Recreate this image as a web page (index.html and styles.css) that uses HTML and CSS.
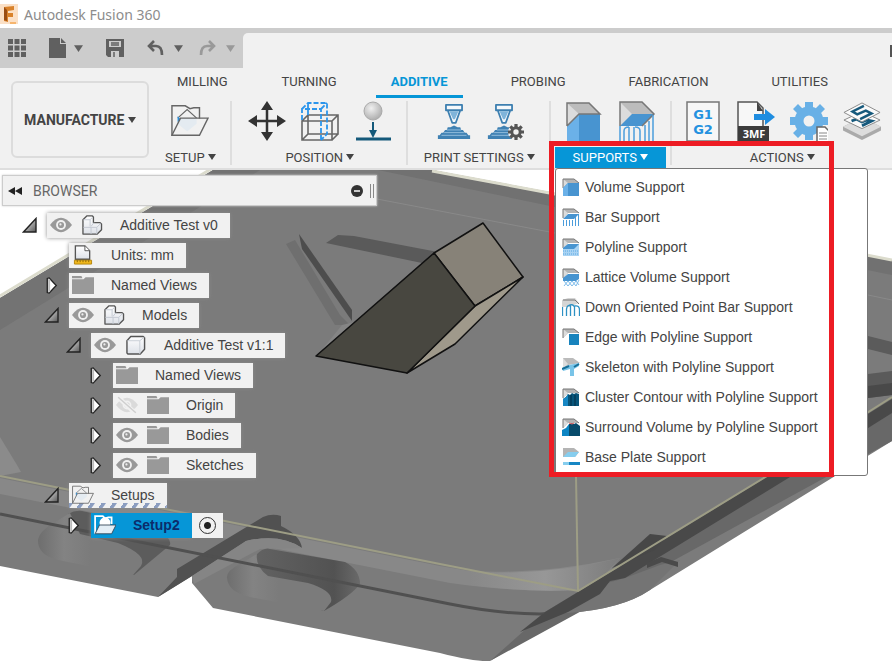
FILE: index.html
```
<!DOCTYPE html>
<html lang="en">

<head>
    <meta charset="utf-8">
    <title>Autodesk Fusion 360</title>
    <meta name="viewport" content="width=device-width, initial-scale=1">
    <link rel="stylesheet" href="styles.css">
</head>

<body>

    <!-- shared icons -->
    <svg class="defs" width="0" height="0" aria-hidden="true">
        <defs>
            <linearGradient id="metal" x1="0" y1="0" x2="1" y2="1">
                <stop offset="0" stop-color="#fff" />
                <stop offset="1" stop-color="#555" />
            </linearGradient>
            <linearGradient id="box-side" x1="0" y1="0" x2="0" y2="1">
                <stop offset="0" stop-color="#fff" />
                <stop offset="1" stop-color="#dde1e8" />
            </linearGradient>
            <symbol id="caret" viewBox="0 0 8 6"><path d="M0 0h8L4 6z" fill="currentColor" /></symbol>
            <symbol id="eye" viewBox="0 0 20 14">
                <path d="M0 7Q10-6 20 7Q10 20 0 7z" fill="#999" />
                <circle cx="10" cy="7" r="4.5" fill="#f1f1f1" />
                <circle cx="10" cy="7" r="2.8" fill="#999" />
                <circle cx="9.500" cy="6.500" r="1" fill="#eee" />
            </symbol>
            <symbol id="eye-off" viewBox="0 0 20 14">
                <path d="M0 7Q10-6 20 7Q10 20 0 7z" fill="#dadada" />
                <circle cx="10" cy="7" r="4" fill="#f1f1f1" />
                <circle cx="10" cy="7" r="2.500" fill="#dadada" />
                <path d="M2 0l15 14" stroke="#f1f1f1" stroke-width="4" />
                <path d="M2 0l16 14" stroke="#cfcfcf" stroke-width="1.300" />
            </symbol>
            <symbol id="folder" viewBox="0 0 21 17">
                <path d="M0 0h9l1 2H0zM0 3h11l2-2h8v16H0z" fill="#999" />
            </symbol>
            <symbol id="parts" viewBox="0 0 22 21">
                <path d="M1.500 5l4-4h6l1 1v6h7l1.500 1.500v6l-4.500 4.500h-15z" fill="url(#box-side)" stroke="#555" stroke-width="1.400" stroke-linejoin="round" />
                <path d="M2 13h8v7M10 12l3-4M10 13h6l4-4M16 13v7M9 12V5H2M9 5l3-3" fill="none" stroke="#c3c8d2" />
            </symbol>
            <symbol id="cube" viewBox="0 0 22 21">
                <path d="M1.500 6l4-4.500h13l1.500 1.500v12l-4.500 5h-13l-1-1z" fill="url(#box-side)" stroke="#555" stroke-width="1.500" stroke-linejoin="round" />
                <path d="M2 6h13v14M15 6l5-4" fill="none" stroke="#c8ced6" />
            </symbol>
            <symbol id="units" viewBox="0 0 20 21">
                <path d="M2 15V1h10l5 5v9z" fill="url(#box-side)" stroke="#555" stroke-width="1.400" />
                <path d="M12 1v5h5" fill="#fff" stroke="#555" />
                <path d="M1 16h18v4H1z" fill="#f2b91d" stroke="#b5860c" />
                <path d="M4 16v2M7 16v2M10 16v2M13 16v2M16 16v2" stroke="#8a6400" />
            </symbol>
            <symbol id="setup" viewBox="0 0 40 34">
                <path d="M1 32V1h14l5 3 4-1h6v12" fill="none" stroke="#666" stroke-width="1.500" />
                <path d="M7 14l10-9 10 9v6l-10 8-10-8z" fill="#cfe2f1" />
                <path d="M7 14l10-9 10 9" fill="#f1f1f1" stroke="#666" stroke-width="1.200" />
                <path d="M7 12v6l3-3z" fill="#2a8fdc" />
                <path d="M1 32l9-18h29l-9 18z" fill="#f1f1f1" fill-opacity=".6" stroke="#666" stroke-width="1.500" />
            </symbol>
            <symbol id="open" viewBox="0 0 16 16"><path d="M1.500 14.500h12.500V1z" fill="url(#metal)" stroke="#222" stroke-width="1.400" /></symbol>
            <symbol id="closed" viewBox="0 0 16 18"><path d="M3 1.500v15l2 .500 7.500-8L5 1z" fill="#fff" stroke="#222" stroke-width="1.400" /><path d="M5 2v14" stroke="#bbb" stroke-width="2" /></symbol>
            <symbol id="wedge" viewBox="0 0 18 18">
                <path d="M1 1h11l5 4H6l-5 5z" fill="#b4b4b4" /><path d="M1 1l5 4-5 5z" fill="#dcdcdc" />
                <path d="M1 10V1h11l5 4" fill="none" stroke="#777" />
            </symbol>
            <symbol id="nozzle" viewBox="0 0 38 40">
                <path d="M10 2h18v6H10zM12 8h14l-5 14h-4z" fill="#f4f8fb" stroke="#3d7fb0" stroke-width="2" stroke-linejoin="round" />
                <path d="M14 9h10l-4 9h-2z" fill="#7fb4da" />
                <path d="M19 25l4 2h3l1 3h2l2 3h2l2 3h2v4H1v-4h2l2-3h2l2-3h2l1-3h3z" fill="#3f81b3" />
                <path d="M11 30h16M8 33h22M5 36h28" stroke="#9cc4e2" />
            </symbol>
        </defs>
    </svg>

    <header class="titlebar">
        <svg class="logo" viewBox="0 0 18 20" aria-hidden="true">
            <path d="M0 0h18v20H0z" fill="#fbe0c6" />
            <path d="M4 3l10-1v4l-6 1v2h5v4H8v5l-4-1z" fill="#d9822b" />
            <path d="M4 3l3 3v11l-3-1z" fill="#9a4d12" />
            <path d="M10 18h6v2h-6z" fill="#f6b56e" />
        </svg>
        <h1>Autodesk Fusion 360</h1>
    </header>

    <div class="quickbar">
        <div class="quick-tools">
            <button type="button" aria-label="Data panel">
                <svg width="18" height="18" viewBox="0 0 18 18"><path d="M0 0h5v5H0zM6.500 0h5v5h-5zM13 0h5v5h-5zM0 6.500h5v5H0zM6.500 6.500h5v5h-5zM13 6.500h5v5h-5zM0 13h5v5H0zM6.500 13h5v5h-5zM13 13h5v5h-5z" fill="#606060" /></svg>
            </button>
            <button type="button" aria-label="File">
                <svg width="18" height="20" viewBox="0 0 18 20"><path d="M0 0h11v6h6v14H0zM12 0l5 5h-5z" fill="#606060" /></svg>
                <svg class="drop"><use href="#caret" /></svg>
            </button>
            <button type="button" aria-label="Save">
                <svg width="18" height="18" viewBox="0 0 18 18"><path d="M0 0h18v18H2l-2-2z" fill="#606060" /><path d="M3 2h12v6H3zM5 12h8v6H5z" fill="#ccc" /><path d="M5 4h8M5 6h8M8 13v5" stroke="#606060" stroke-width="1.500" /></svg>
            </button>
            <div class="history">
                <button type="button" aria-label="Undo">
                    <svg width="17" height="16" viewBox="0 0 17 16"><path d="M7 1L2 6l5 5M2 6h7q6 0 6 9" fill="none" stroke="#606060" stroke-width="2.600" /></svg>
                    <svg class="drop"><use href="#caret" /></svg>
                </button>
                <button type="button" aria-label="Redo" disabled>
                    <svg width="17" height="16" viewBox="0 0 17 16"><path d="M10 1l5 5-5 5M15 6H8Q2 6 2 15" fill="none" stroke="#999" stroke-width="2.600" /></svg>
                    <svg class="drop"><use href="#caret" /></svg>
                </button>
            </div>
        </div>
        <div class="doc-tab"><span class="doc-icon"></span></div>
    </div>

    <div class="ribbon">
        <button type="button" class="workspace">MANUFACTURE <svg class="caret"><use href="#caret" /></svg></button>
        <div class="ribbon-main">
            <nav class="tabs">
                <a href="#">MILLING</a>
                <a href="#">TURNING</a>
                <a href="#" class="active">ADDITIVE</a>
                <a href="#">PROBING</a>
                <a href="#">FABRICATION</a>
                <a href="#">UTILITIES</a>
            </nav>

            <div class="groups">
                <div class="group">
                    <div class="icons">
                        <svg viewBox="0 0 40 40"><use href="#setup" y="3" width="40" height="34" /></svg>
                    </div>
                    <button type="button" class="group-name">SETUP <svg class="caret"><use href="#caret" /></svg></button>
                </div>

                <div class="group">
                    <div class="icons">
                        <svg viewBox="0 0 38 40"><path d="M19 5v30M4 20h30" stroke="#333" stroke-width="2.500" /><path d="M19 0l6 9H13zM19 40l6-9H13zM0 20l9-6v12zM38 20l-9-6v12z" fill="#333" /></svg>
                        <svg viewBox="0 0 38 40" fill="none" stroke-width="1.600">
                            <path d="M1 20h30v19H1zM7 14h30v19H7zM1 20l6-6M31 20l6-6M31 39l6-6M1 39l6-6" stroke="#666" />
                            <path d="M1 19V8h19v31M1 8l6-6h19v31l-6 6M20 8l6-6M7 2v12" stroke="#2b95ec" stroke-width="1.800" stroke-dasharray="5 2" />
                        </svg>
                        <svg viewBox="0 0 38 40"><defs><radialGradient id="ball" cx=".4" cy=".35" r=".7"><stop offset="0" stop-color="#f0f0f0" /><stop offset="1" stop-color="#aaa" /></radialGradient></defs>
                            <circle cx="19" cy="10" r="9" fill="url(#ball)" stroke="#aaa" /><path d="M19 21v9" stroke="#14597a" stroke-width="2" /><path d="M15 29h8l-4 8z" fill="#14597a" /><path d="M2 36.500h35v3H2z" fill="#14597a" />
                        </svg>
                    </div>
                    <button type="button" class="group-name">POSITION <svg class="caret"><use href="#caret" /></svg></button>
                </div>

                <div class="group">
                    <div class="icons">
                        <svg viewBox="0 0 38 40"><use href="#nozzle" x="3" width="34" height="40" /></svg>
                        <svg viewBox="0 0 38 40"><use href="#nozzle" x="0" width="34" height="40" />
                            <circle cx="29" cy="31" r="8" fill="#f1f1f1" />
                            <path d="M29 23v16M21 31h16M23.300 25.300l11.400 11.400M34.700 25.300L23.300 36.700" stroke="#555" stroke-width="3.200" />
                            <circle cx="29" cy="31" r="4.200" fill="#f1f1f1" stroke="#555" stroke-width="3" />
                        </svg>
                    </div>
                    <button type="button" class="group-name">PRINT SETTINGS <svg class="caret"><use href="#caret" /></svg></button>
                </div>

                <div class="group supports">
                    <div class="icons">
                        <svg viewBox="0 0 38 40"><path d="M2 2h22l11 11H14L2 25z" fill="#bcbcbc" /><path d="M2 2l12 11L2 25z" fill="#dcdcdc" /><path d="M2 25l12-12v27H2z" fill="#6bb1e8" /><path d="M14 13h21v27H14z" fill="#4894d0" /><path d="M2 25V2h22l11 11H14L2 25" fill="none" stroke="#777" stroke-width="1.500" /></svg>
                        <svg viewBox="0 0 38 40"><path d="M2 1h22l12 12H14L2 25z" fill="#bcbcbc" /><path d="M2 1l12 12L2 25z" fill="#dcdcdc" /><path d="M2 25l12-12h22L24 25z" fill="#4894d0" /><path d="M2 25V1h22l12 12-12 12" fill="none" stroke="#777" stroke-width="1.500" /><path d="M2 40V25M6 40V30q0-4 5-4M11 40V26M16 40V26M22 40V30q0-4-5-4M27 40V24M31 40V20M35 40V14" fill="none" stroke="#4b9ddc" stroke-width="1.500" /></svg>
                    </div>
                    <button type="button" class="group-name open" aria-expanded="true">SUPPORTS <svg class="caret"><use href="#caret" /></svg></button>

                    <ul class="menu">
                        <li><button type="button"><svg viewBox="0 0 18 18"><use href="#wedge" /><path d="M1 10l5-5h11v13H1z" fill="#4894d0" /><path d="M1 10l5-5v13H1z" fill="#6bb1e8" /></svg>Volume Support</button></li>
                        <li><button type="button"><svg viewBox="0 0 18 18"><use href="#wedge" /><path d="M1 11l5-5h11l-5 5z" fill="#4894d0" /><path d="M1.500 18v-6M4.500 18v-6M7.500 18v-6M10.500 18v-6M13.500 18V9M16.500 18V6" stroke="#4b9ddc" /></svg>Bar Support</button></li>
                        <li><button type="button"><svg viewBox="0 0 18 18"><use href="#wedge" /><path d="M1 10l5-4h11v12H1z" fill="#a9d3f3" /><path d="M1 10l5-4h11l-5 5H1z" fill="#4894d0" /><path d="M1 13h16M1 16h16" stroke="#5aa7e2" stroke-dasharray="1 1" /></svg>Polyline Support</button></li>
                        <li><button type="button"><svg viewBox="0 0 18 18"><use href="#wedge" /><path d="M1 10l5-4h11v5l-3 2H1z" fill="#4894d0" /><path d="M2 18l4-5 4 5 4-5 3 4M2 13l4 5 4-5 4 5 3-6" fill="none" stroke="#7dbbea" /></svg>Lattice Volume Support</button></li>
                        <li><button type="button"><svg viewBox="0 0 18 18"><path d="M0 2l6-2h7l4 5-10 4H0z" fill="#d5d5d5" /><path d="M.500 18V9M4.500 18v-7q1-5 4-3v10M12.500 18V9q-2-4-6-1M12.500 8q5-1 5 4v6" fill="none" stroke="#2e91c4" stroke-width="1.300" /><path d="M1 2h12l4 4" fill="none" stroke="#777" /></svg>Down Oriented Point Bar Support</button></li>
                        <li><button type="button"><svg viewBox="0 0 18 18"><use href="#wedge" /><path d="M7 6h10v11H7z" fill="#1883bd" /></svg>Edge with Polyline Support</button></li>
                        <li><button type="button"><svg viewBox="0 0 18 18"><path d="M1 0h10l7 5-12 2-5 4z" fill="#bbb" /><path d="M1 0l5 6-5 5z" fill="#ddd" /><path d="M0 10l7-3 10-2v3l-5 3v7H8v-7l-7 2z" fill="#79c4e8" /><path d="M0 11l7-3M12 9l5-3" stroke="#176f98" stroke-width="2" /></svg>Skeleton with Polyline Support</button></li>
                        <li><button type="button"><svg viewBox="0 0 18 18"><use href="#wedge" /><path d="M1 11l3-2 2-3 2 1 2-2 2 1 2-1 3 1v12H1z" fill="#08557a" /><path d="M1 11l3-2 2-3v12H1z" fill="#1787c4" /><path d="M9 7v11M13 7v11" stroke="#022f46" /></svg>Cluster Contour with Polyline Support</button></li>
                        <li><button type="button"><svg viewBox="0 0 18 18"><use href="#wedge" /><path d="M7 6l3-1 2 1 2-1 4 3v10H7z" fill="#074b6b" /><path d="M0 12l4-2 3-4v12H0z" fill="#0d85c4" /><path d="M7 5l3 1 2-1" stroke="#e66" fill="none" /></svg>Surround Volume by Polyline Support</button></li>
                        <li><button type="button"><svg viewBox="0 0 18 18"><path d="M1 0h11l5 4-4 5H1z" fill="#b4b4b4" /><path d="M1 9l5-5h11l-4 5z" fill="#86cdee" /><path d="M1 14h6v3H1z" fill="#86cdee" /><path d="M7 14h11v3H7z" fill="#1787c4" /></svg>Base Plate Support</button></li>
                    </ul>
                    <div class="callout"></div>
                </div>

                <div class="group actions">
                    <div class="icons">
                        <svg viewBox="0 0 38 40"><path d="M3 1h32v39H3z" fill="#f7f7f7" stroke="#777" stroke-width="1.500" /><text x="19" y="18" class="gcode">G1</text><text x="19" y="33" class="gcode">G2</text></svg>
                        <svg viewBox="0 0 38 40"><path d="M1 40V1h19l6 6v33" fill="#f7f7f7" stroke="#555" stroke-width="1.500" /><path d="M20 1l6 9h-6z" fill="#444" /><path d="M17 13h11V8l10 8-10 8v-5H17z" fill="#1f8de0" /><path d="M1 25h31v15H1z" fill="#3c3c3c" /><text x="17" y="37" class="mf">3MF</text></svg>
                        <svg viewBox="0 0 38 40"><circle cx="19" cy="20" r="10" fill="none" stroke="#68b0e6" stroke-width="9" /><path d="M15 1h8v7h-8zM15 32h8v7h-8zM0 16h7v8H0zM31 16h7v8h-7zM3 8l5-5 6 6-5 5zM24 9l6-6 5 5-6 6zM3 32l6-6 5 5-6 6z" fill="#68b0e6" /><path d="M27 26h8l4 4v12H27z" fill="#fff" stroke="#666" stroke-width="1.500" /><path d="M29 32h8M29 35h8M29 38h8" stroke="#888" /></svg>
                        <svg viewBox="0 0 40 40"><path d="M0 26l20-10 20 10v4L20 40 0 30z" fill="#aaa" /><path d="M0 26l20-10 20 10-20 10z" fill="#ddd" /><path d="M1 19l19-9 19 9-19 9z" fill="#fafafa" stroke="#888" /><path d="M9 20l5-2 6 3 5-2 5 1-10 5" stroke="#16597c" stroke-width="3" fill="none" /><path d="M1 11l19-10 19 10-19 10z" fill="#fafafa" stroke="#888" /><path d="M22 4l-12 6 5 3 9-4 6 3-12 6" stroke="#16597c" stroke-width="2.600" fill="none" /></svg>
                    </div>
                    <button type="button" class="group-name">ACTIONS <svg class="caret"><use href="#caret" /></svg></button>
                </div>
            </div>
        </div>
    </div>

    <main class="viewport">
        <svg class="scene" viewBox="0 170 892 498" preserveAspectRatio="xMinYMin slice" aria-hidden="true">
            <defs>
                <linearGradient id="slot"><stop offset="0" stop-color="#6e6e6e" /><stop offset=".25" stop-color="#838383" /><stop offset=".5" stop-color="#7b7b7b" /></linearGradient>
                <linearGradient id="dark-end"><stop offset="0" stop-color="#626262" /><stop offset=".75" stop-color="#525252" /><stop offset="1" stop-color="#6a6a6a" /></linearGradient>
                <linearGradient id="corner"><stop offset="0" stop-color="#888" /><stop offset=".5" stop-color="#979797" /><stop offset="1" stop-color="#7c7c7c" /></linearGradient>
            </defs>
            <path d="M0 298L213 170H432L555 193L892 260V441L650 590Q622 609 568 613L490 661Q475 662 440 653L213 608L192 583V576L158 597L0 566z" fill="#7b7b7b" />
            <path d="M0 298L213 170H260L0 330z" fill="#737373" />
            <path d="M378 170h54L892 261v14L555 207z" fill="#717171" />
            <path d="M0 296L211 169M432 171L555 194L892 260" fill="none" stroke="#dcdccd" stroke-width="3" />
            <path d="M377 199L555 233L868 295L892 300" fill="none" stroke="#898989" />

            <!-- pockets in the plate -->
            <path d="M0 437L17 465 21 472 0 476z" fill="#8b8b8b" />
            <path d="M286 244l9-4 45 75 10 10-15 0z" fill="#6f6f6f" />
            <path d="M299 234l53 76v11l-50-72z" fill="#4d4d4d" />
            <path d="M342 325l-22 27 24-5 10-25z" fill="#858585" />
            <path d="M326 243l12-8 16 1 84 16-16 11z" fill="#5a5a5a" />
            <path d="M868 336l24 6v13l-24-6z" fill="#5b5b5b" />
            <path d="M868 374l24-3v24l-24 3z" fill="#5a5a5a" />
            <path d="M868 386l24-3v12l-24 3z" fill="#494949" />

            <!-- front wall -->
            <path d="M0 478L440 566L470 571Q540 575 620 558L600 583L578 590Q520 593 450 583L0 494z" fill="#888" />
            <path d="M470 572Q550 576 620 558L600 580 578 590Q530 593 470 585z" fill="url(#corner)" />
            <path d="M177 569L263 517Q272 513 281 516V526Q300 535 302 548Q280 533 246 541L192 576 158 597 177 577z" fill="#515151" />
            <path d="M246 541Q280 533 302 548L260 549 194 584 192 576z" fill="#858585" />
            <path d="M68 514Q75 510 82 511L150 526Q172 536 170 545L134 575 68 545z" fill="#5c5c5c" />
            <path d="M38 541Q38 532 55 522L70 513 80 534 118 543Q148 555 141 566L133 575L58 560Q38 555 38 541z" fill="url(#slot)" />
            <path d="M256 555Q264 547 270 549L345 562Q360 570 360 584Q352 595 324 611L256 590z" fill="url(#dark-end)" />
            <path d="M227 578Q226 571 240 564L257 554Q255 566 268 576L308 583Q334 591 331 602L324 611L250 597Q228 592 227 578z" fill="url(#slot)" />
            <path d="M0 514L450 604Q500 614 540 614L572 612" fill="none" stroke="#505050" stroke-width="3" />

            <!-- right wall -->
            <path d="M892 397L767 476 578 592 545 612 490 661 892 441z" fill="#686868" />
            <path d="M578 592Q610 582 625 578L660 565 680 560 650 590Q622 609 568 613L545 612z" fill="#747474" />
            <path d="M892 399L767 477 578 592 545 612 520 632 568 612 600 594 610 581 625 578 790 477 892 413z" fill="#494949" />
            <path d="M612 568L650 534 667 536 655 550z" fill="#474747" />
            <path d="M647 563l14-6 17 5v5l-16-5-15 6z" fill="#4a4a4a" />
            <path d="M0 476L440 564L578 591L767 476L892 397M576 476L578 591" fill="none" stroke="#9d9d85" stroke-width="2" />

            <!-- part body -->
            <g stroke="#111" stroke-width="1.500" stroke-linejoin="round">
                <path d="M434 253L483 223 523 277 475 306z" fill="#878278" />
                <path d="M475 306L523 277 455 344 407 373z" fill="#9f998b" />
                <path d="M316 356L434 253 475 306 407 373z" fill="#484740" />
            </g>
        </svg>

        <section class="browser">
            <div class="browser-head">
                <button type="button" aria-label="Collapse"><svg width="14" height="8" viewBox="0 0 14 8"><path d="M7 0v8L0 4zM14 0v8L7 4z" fill="#222" /></svg></button>
                <h2>BROWSER</h2>
                <button type="button" aria-label="Minimize"><svg width="12" height="12" viewBox="0 0 12 12"><circle cx="6" cy="6" r="6" fill="#333" /><path d="M3 6h6" stroke="#fff" stroke-width="1.500" /></svg></button>
                <span class="grip"></span>
            </div>

            <ul class="tree">
                <li>
                    <div class="node"><svg class="arrow"><use href="#open" /></svg><span class="chip"><svg><use href="#eye" /></svg><svg><use href="#parts" /></svg>Additive Test v0</span></div>
                    <ul>
                        <li><div class="node"><span class="arrow"></span><span class="chip"><svg><use href="#units" /></svg>Units: mm</span></div></li>
                        <li><div class="node"><svg class="arrow"><use href="#closed" /></svg><span class="chip"><svg><use href="#folder" /></svg>Named Views</span></div></li>
                        <li>
                            <div class="node"><svg class="arrow"><use href="#open" /></svg><span class="chip"><svg><use href="#eye" /></svg><svg><use href="#parts" /></svg>Models</span></div>
                            <ul>
                                <li>
                                    <div class="node"><svg class="arrow"><use href="#open" /></svg><span class="chip"><svg><use href="#eye" /></svg><svg><use href="#cube" /></svg>Additive Test v1:1</span></div>
                                    <ul>
                                        <li><div class="node"><svg class="arrow"><use href="#closed" /></svg><span class="chip"><svg><use href="#folder" /></svg>Named Views</span></div></li>
                                        <li><div class="node"><svg class="arrow"><use href="#closed" /></svg><span class="chip"><svg><use href="#eye-off" /></svg><svg><use href="#folder" /></svg>Origin</span></div></li>
                                        <li><div class="node"><svg class="arrow"><use href="#closed" /></svg><span class="chip"><svg><use href="#eye" /></svg><svg><use href="#folder" /></svg>Bodies</span></div></li>
                                        <li><div class="node"><svg class="arrow"><use href="#closed" /></svg><span class="chip"><svg><use href="#eye" /></svg><svg><use href="#folder" /></svg>Sketches</span></div></li>
                                    </ul>
                                </li>
                            </ul>
                        </li>
                        <li>
                            <div class="node"><svg class="arrow"><use href="#open" /></svg><span class="chip pending"><svg><use href="#setup" /></svg>Setups</span></div>
                            <ul>
                                <li><div class="node"><svg class="arrow"><use href="#closed" /></svg><span class="chip selected"><svg viewBox="0 0 20 18"><path d="M1 17V1h7l2 2 3-1h3v6" fill="none" stroke="#fff" stroke-width="1.600" /><circle cx="10" cy="7" r="5" fill="#fff" /><path d="M1 17l4-8h15l-4 8z" fill="#e4eef5" stroke="#345" stroke-width=".8" /></svg>Setup2</span><span class="active-box"><input type="radio" name="active-setup" aria-label="Setup2 active" checked></span></div></li>
                            </ul>
                        </li>
                    </ul>
                </li>
            </ul>
        </section>
    </main>

</body>

</html>
```
FILE: styles.css
```
* {
    box-sizing: border-box;
}

body {
    margin: 0;
    min-height: 100vh;
    display: flex;
    flex-direction: column;
    font-family: "Liberation Sans", Arial, sans-serif;
    font-size: 13px;
    color: #444;
    background: #fff;
}

button {
    border: 0;
    padding: 0;
    background: none;
    font: inherit;
    color: inherit;
    cursor: pointer;
}

ul {
    margin: 0;
    padding: 0;
    list-style: none;
}

.defs {
    position: absolute;
}

.caret {
    width: 8px;
    height: 6px;
    vertical-align: 2px;
}

/* title and quick access */
.titlebar {
    display: flex;
    align-items: center;
    gap: 6px;
    height: 28px;
}

.titlebar h1 {
    margin: 0;
    font: 14px "Noto Sans", sans-serif;
    color: #8c8c8c;
}

.logo {
    width: 18px;
    height: 20px;
}

.quickbar {
    display: flex;
    height: 40px;
    background: #ccc;
}

.quick-tools {
    display: flex;
    align-items: center;
    gap: 23px;
    width: 243px;
    padding-left: 8px;
    color: #606060;
}

.quick-tools button {
    display: flex;
    align-items: center;
    gap: 7px;
}

.quick-tools button:disabled {
    color: #999;
}

.history {
    display: flex;
    gap: 16px;
}

.history button {
    gap: 10px;
}

.drop {
    width: 9px;
    height: 7px;
}

.doc-tab {
    flex: 1;
    display: flex;
    justify-content: flex-end;
    align-items: center;
    margin-top: 5px;
    border-top-left-radius: 5px;
    background: #f1f1f1;
}

.doc-icon {
    width: 2px;
    height: 12px;
    background: #555;
}

/* ribbon */
.ribbon {
    display: flex;
    height: 102px;
    padding-left: 11px;
    background: #f1f1f1;
    border-bottom: 2px solid #dedede;
    font-family: Roboto, sans-serif;
}

.workspace {
    flex: none;
    width: 138px;
    height: 77px;
    margin-top: 13px;
    border: 2px solid #dcdcdc;
    border-radius: 6px;
    font-size: 14px;
    font-weight: bold;
}

.ribbon-main {
    flex: 1;
    min-width: 0;
}

.tabs {
    display: flex;
    gap: 24px;
    height: 30px;
    padding-left: 13px;
}

.tabs a {
    padding: 0 15px;
    line-height: 28px;
    color: inherit;
    text-decoration: none;
}

.tabs .active {
    border-bottom: 3px solid #0696d7;
    color: #0696d7;
    font-weight: bold;
}

.tabs .active,
.tabs .active ~ a {
    margin-right: 9px;
}

.groups {
    display: flex;
    padding-top: 3px;
}

.group {
    position: relative;
    display: flex;
    flex-direction: column;
    align-items: center;
    gap: 6px;
    height: 67px;
    padding: 0 16px;
}

.group:not(:last-child)::after {
    content: "";
    position: absolute;
    right: 0;
    top: 0;
    width: 2px;
    height: 64px;
    background: #dedede;
}

.icons {
    display: flex;
    gap: 15px;
}

.icons svg {
    width: 38px;
    height: 40px;
}

.group-name {
    height: 21px;
    white-space: nowrap;
}

.group.supports {
    padding: 0 6px 0 4px;
}

.group.actions {
    flex: 1;
    padding: 0 12px;
}

.group-name.open {
    width: 111px;
    background: #0696d7;
    color: #fff;
}

.gcode {
    font: bold 13px "DejaVu Sans", sans-serif;
    fill: #2492e0;
    text-anchor: middle;
}

.mf {
    font: bold 11px "Noto Sans", sans-serif;
    fill: #fff;
    text-anchor: middle;
}

/* supports menu */
.menu {
    position: absolute;
    z-index: 2;
    top: 100%;
    left: 4px;
    width: 313px;
    padding: 3px 0;
    background: #fff;
    border: 1px solid #777;
    border-radius: 3px;
    font-family: "Liberation Sans", Arial, sans-serif;
    font-size: 14px;
}

.menu button {
    display: flex;
    align-items: center;
    gap: 5px;
    width: 100%;
    height: 30px;
    padding-left: 6px;
}

.menu svg {
    width: 18px;
    height: 18px;
}

.callout {
    position: absolute;
    z-index: 3;
    top: 40px;
    left: -2px;
    width: 285px;
    height: 336px;
    border: 5px solid #ed1c24;
    pointer-events: none;
}

/* canvas and browser tree */
.viewport {
    position: relative;
    flex: 1;
    padding: 5px 2px;
}

.scene {
    position: absolute;
    left: 0;
    top: 0;
    width: 100%;
    height: 100%;
}

.browser {
    position: relative;
    width: 375px;
}

.browser-head {
    display: flex;
    align-items: center;
    gap: 11px;
    height: 31px;
    padding: 0 2px 0 5px;
    background: #f1f1f1;
    border: 1px solid #ccc;
    box-shadow: 0 0 2px #ccc;
}

.browser-head h2 {
    flex: 1;
    margin: 0;
    font: 14px Roboto, sans-serif;
    color: #666;
}

.browser-head button {
    display: flex;
}

.grip {
    width: 4px;
    height: 14px;
    margin-left: -4px;
    border-left: 1px solid #888;
    border-right: 1px solid #888;
}

.tree {
    padding: 4px 0 0 20px;
}

.tree ul {
    padding-left: 22px;
}

.node {
    display: flex;
    align-items: center;
    height: 30px;
}

.arrow {
    width: 16px;
    height: 17px;
    margin-right: 9px;
}

.chip {
    display: flex;
    align-items: center;
    height: 25px;
    padding: 0 12px 0 3px;
    background: #f1f1f1;
    box-shadow: 0 0 4px #8c8c8c;
    font-size: 14px;
}

.chip svg {
    width: 22px;
    height: 20px;
    margin-right: 9px;
}

.chip svg:last-of-type {
    margin-right: 17px;
}

.pending {
    background: repeating-linear-gradient(125deg, #8b9dc0 0 3px, #f1f1f1 4px 9px) bottom / 100% 5px no-repeat #f1f1f1;
}

.selected {
    background: #0696d7;
    color: #0c2c6b;
    font-weight: bold;
}

.active-box {
    display: flex;
    align-items: center;
    justify-content: center;
    width: 31px;
    height: 25px;
    background: #f1f1f1;
}

.active-box input {
    appearance: none;
    width: 17px;
    height: 17px;
    margin: 0;
    border: 1px solid #333;
    border-radius: 50%;
    background: radial-gradient(circle, #222 3px, #f1f1f1 4px);
}
```
